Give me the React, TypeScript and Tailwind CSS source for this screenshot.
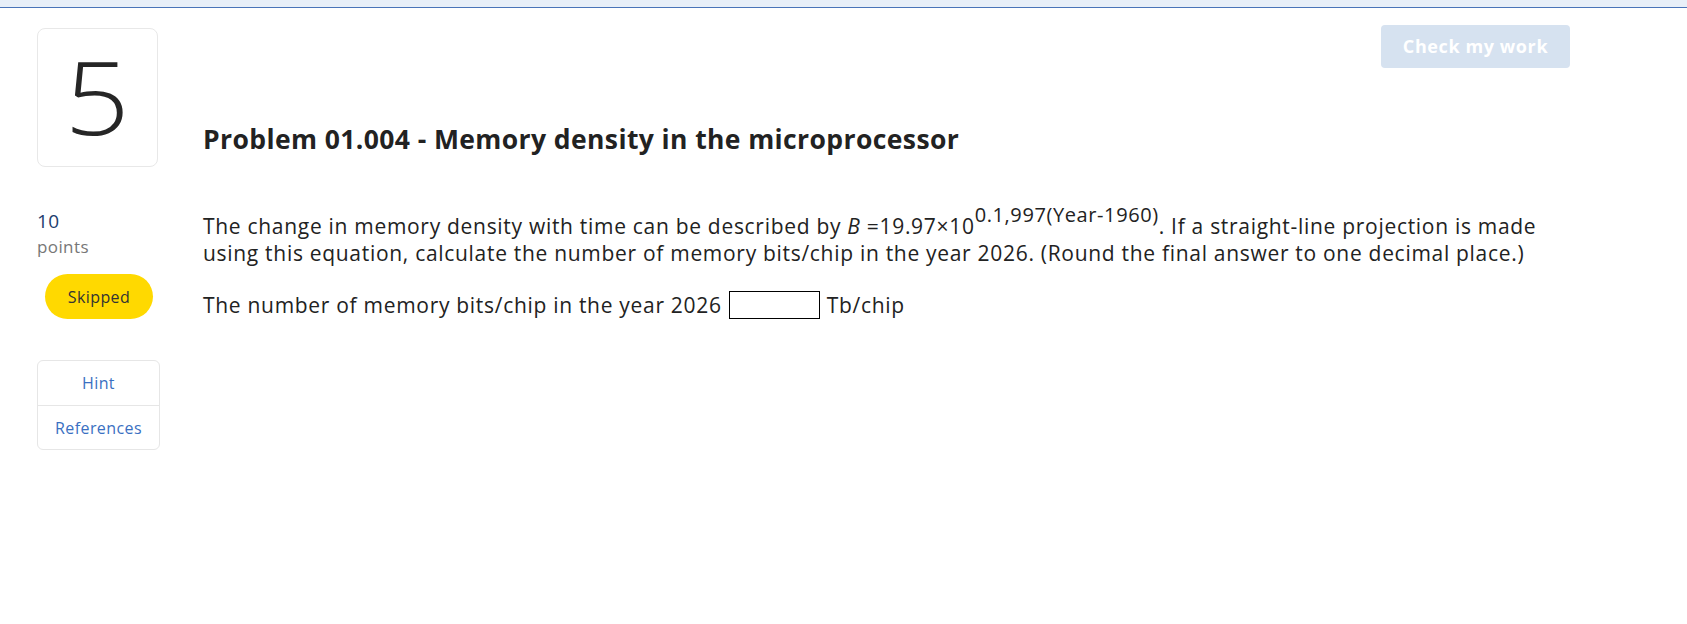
export default function App() {
  return (
    <div className="min-h-screen bg-white font-['Open_Sans','Liberation_Sans',sans-serif] text-[#222]">
      <div className="h-[8px] bg-[#e8eff8] border-b border-[#4a74b8]" />
      <div className="flex pl-[37px] pt-[17px]">
        <div className="w-[121px] shrink-0">
          <div className="mt-[3px] h-[139px] rounded-lg border border-[#e8e8e8] flex items-center justify-center">
            <span className="text-[102px] font-light leading-none text-[#262626] -mt-1 scale-x-[1.12]">5</span>
          </div>
          <div className="mt-[42px] text-[19px] leading-6 text-[#1d3d6e] tracking-[0.3px]">10</div>
          <div className="mt-[2px] text-[17px] leading-6 text-[#777] tracking-[0.4px]">points</div>
          <div className="mt-[15px] ml-[8px] w-[108px] h-[45px] rounded-full bg-[#ffd900] flex items-center justify-center text-[16px] text-[#333] tracking-[0.4px]">
            Skipped
          </div>
          <div className="mt-[41px] w-[123px] rounded-md border border-[#e6e6e6] text-[16px] text-[#3a70c2] tracking-[0.4px]">
            <div className="h-[45px] flex items-center justify-center border-b border-[#e6e6e6]">Hint</div>
            <div className="h-[43px] flex items-center justify-center">References</div>
          </div>
        </div>
        <div className="ml-[45px] w-[1367px]">
          <div className="flex justify-end">
            <button className="w-[189px] h-[43px] rounded bg-[#d6e2f0] text-white text-[18px] font-bold tracking-[0.6px]">
              Check my work
            </button>
          </div>
          <h1 className="mt-[54px] text-[26.5px] leading-[34px] font-bold text-[#222] tracking-[0.4px]">
            Problem 01.004 - Memory density in the microprocessor
          </h1>
          <p className="mt-[57px] text-[21px] leading-[26.6px] text-[#222] tracking-[0.7px]">
            <span>The change in memory density with time can be described by </span>
            <i>B</i>
            <span> =19.97×10</span>
            <sup className="text-[20px] top-[-12px] tracking-[0.6px]">0.1,997(Year-1960)</sup>
            <span>. If a straight-line projection is made</span>
            <br />
            <span>
              using this equation, calculate the number of memory bits/chip in the year 2026. (Round the final answer to
              one decimal place.)
            </span>
          </p>
          <div className="mt-[25px] flex items-center text-[21px] leading-[28px] text-[#222] tracking-[0.7px]">
            <span>The number of memory bits/chip in the year 2026</span>
            <span className="ml-[7px] w-[91px] h-[28px] border border-black" />
            <span className="ml-[7px]">Tb/chip</span>
          </div>
        </div>
      </div>
    </div>
  )
}
